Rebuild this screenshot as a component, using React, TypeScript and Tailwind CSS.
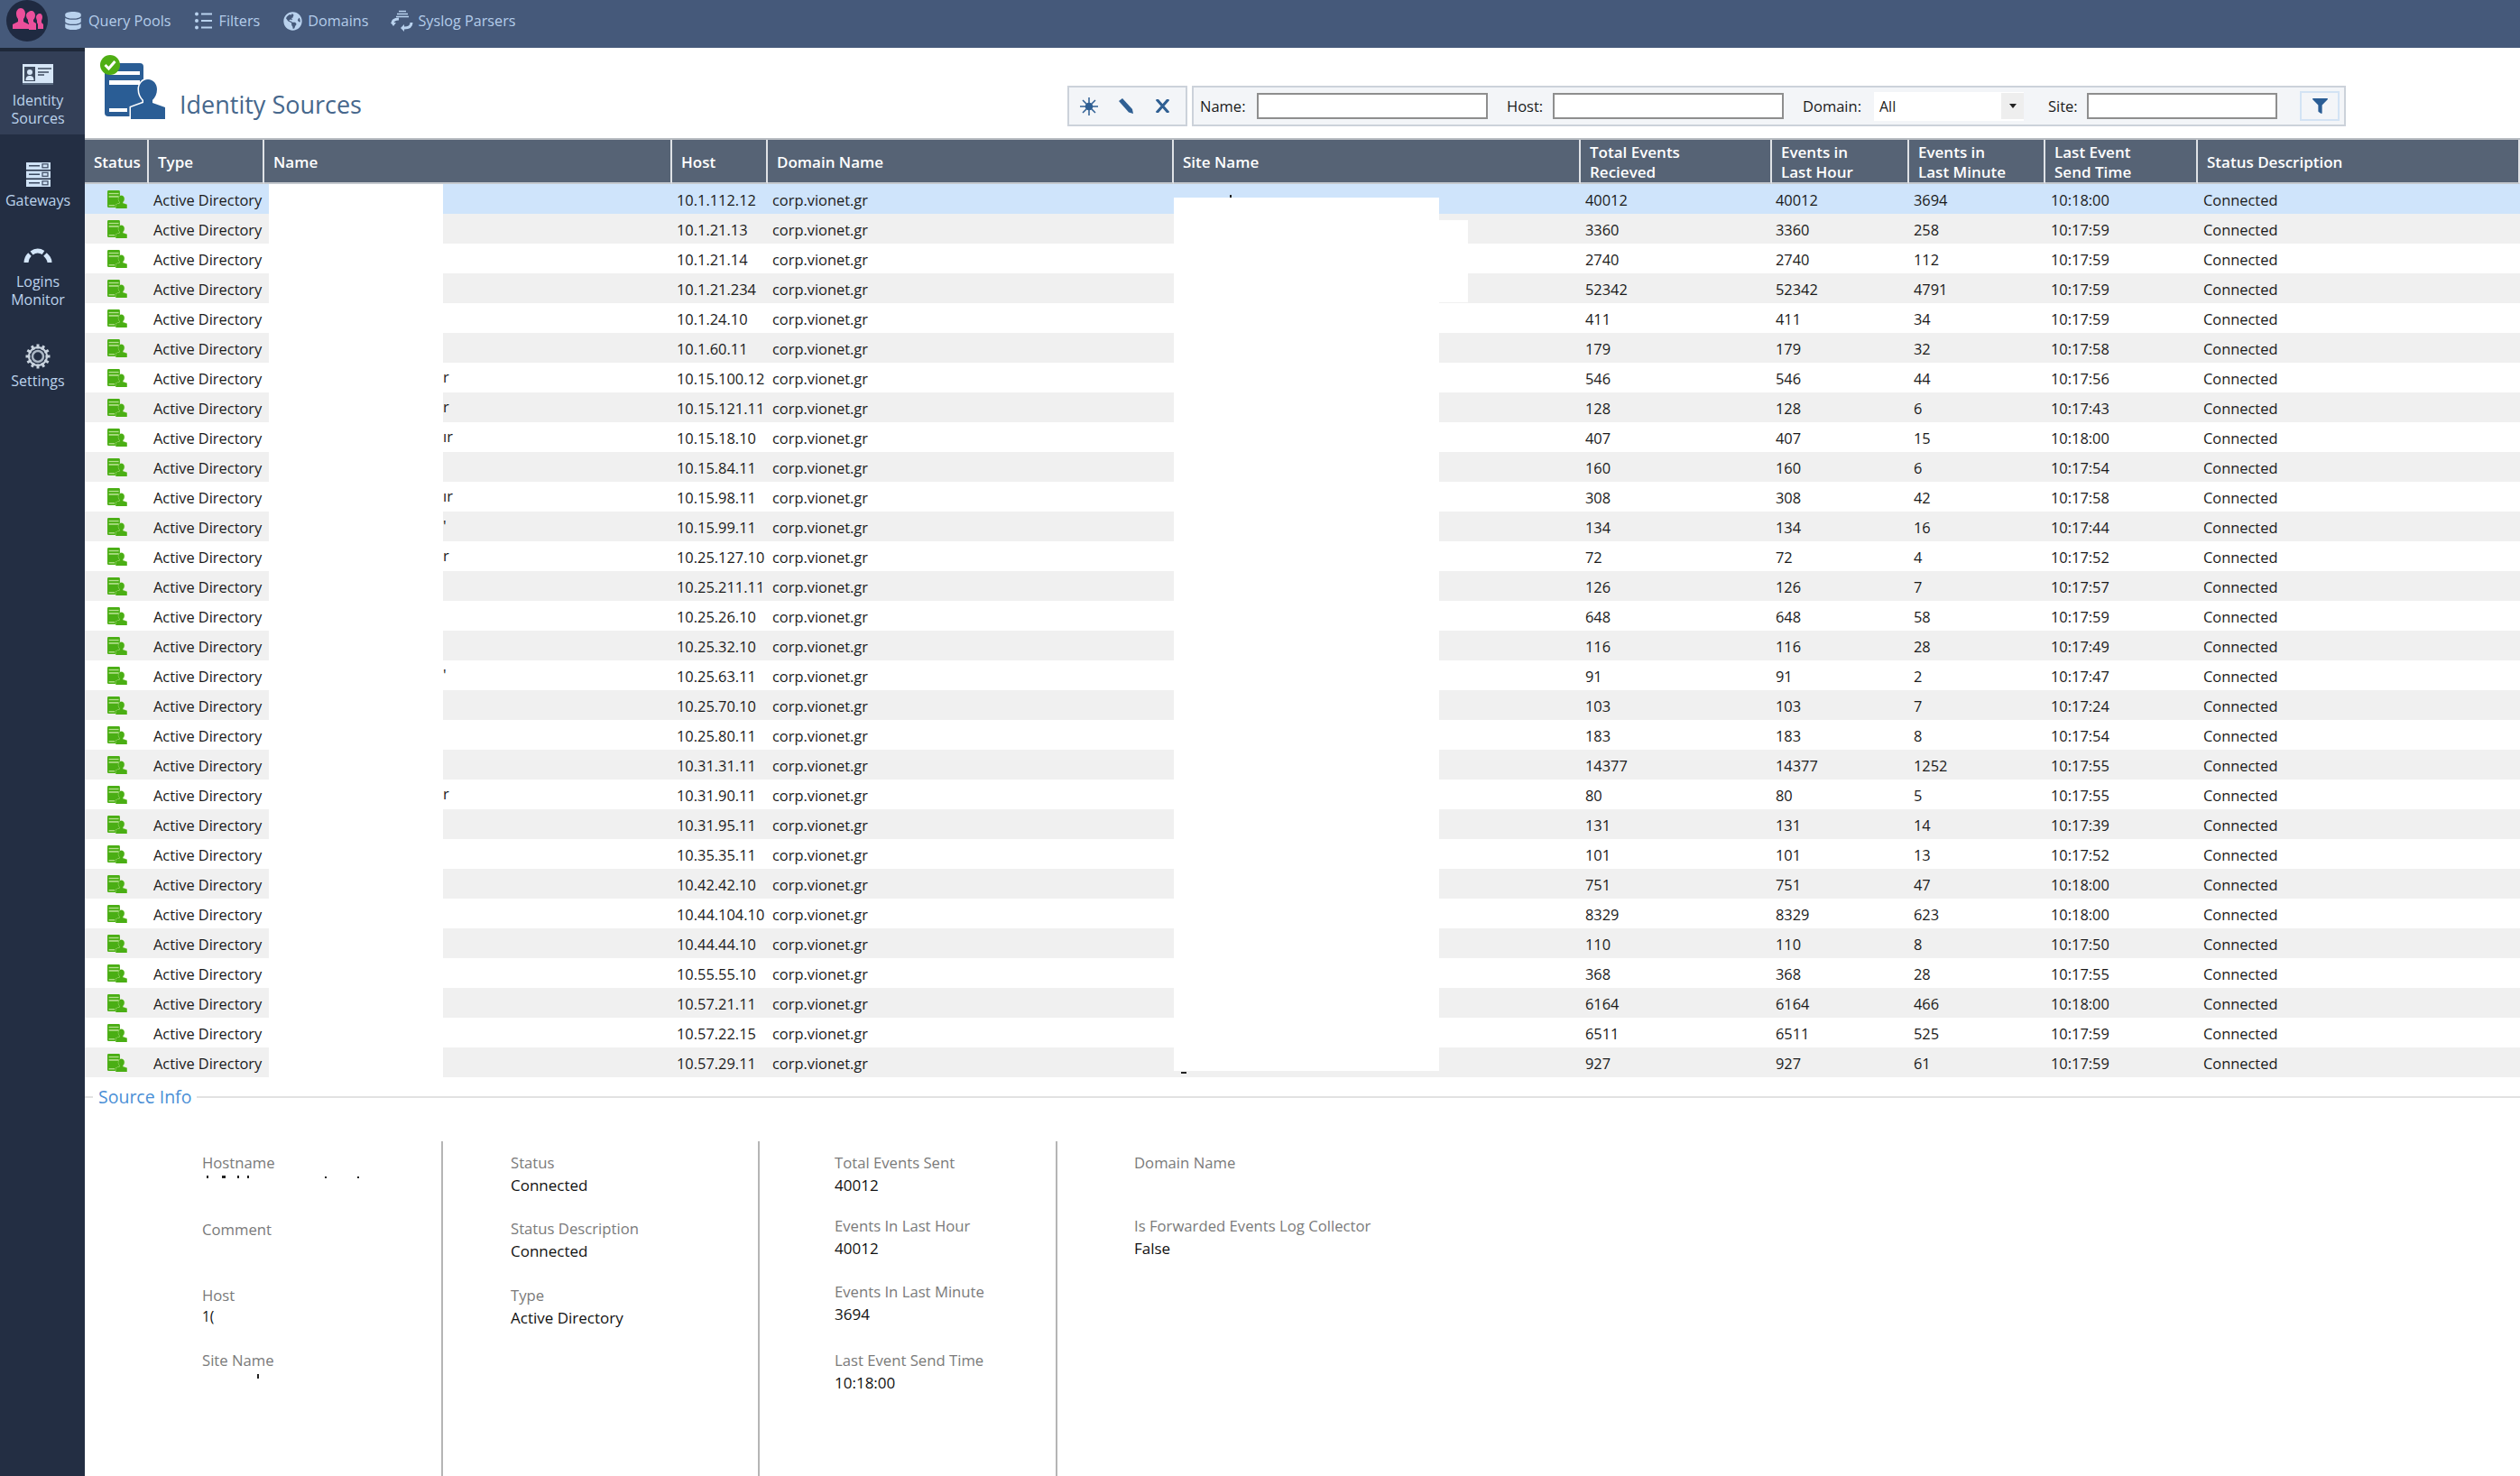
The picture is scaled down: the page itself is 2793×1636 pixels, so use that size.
import { FaDatabase, FaFilter, FaGlobeAmericas } from "react-icons/fa";

const font = "font-['Open_Sans','Liberation_Sans',sans-serif]";

const PERSON = "M48 18c6 0 10 5 10 11 0 5-2 9-5 12v3l14 5v13H29V49l14-5v-3c-3-3-5-7-5-12 0-6 4-11 10-11z";

function SourceIcon({ color, stripe, className }: { color: string; stripe: string; className: string }) {
  return (
    <svg viewBox="0 0 68 62" className={className}>
      <rect x="0" y="0" width="43" height="59" rx="4" fill={color} />
      <rect x="5" y="9" width="34" height="4" fill={stripe} />
      <rect x="5" y="19" width="34" height="5" fill={stripe} />
      <rect x="5" y="50" width="20" height="4" fill={stripe} />
      <path d={PERSON} fill={color} stroke={stripe} strokeWidth="3" paintOrder="stroke" />
    </svg>
  );
}

function PeopleLogo() {
  return (
    <svg viewBox="0 0 46 46" className="h-[46px] w-[46px]">
      <circle cx="23" cy="23" r="23" fill="#1f2a41" />
      <g fill="#ec4f9b">
        <path d="M37 15c2 0 3 2 3 4s-1 3-1 4v2l2 2v5h-6v-5l-1-2v-2c0-1-1-2-1-4s2-4 4-4z" />
        <path d="M28 12c2 0 4 2 4 5 0 2-1 4-2 5v2l3 2v7h-8v-7l-1-2v-2c-1-1-2-3-2-5 0-3 4-5 6-5z" />
        <path d="M16 9c3 0 5 3 5 6 0 3-1 5-2 6v3l6 3v5H7v-5l6-3v-3c-1-1-2-3-2-6 0-3 2-6 5-6z" />
      </g>
    </svg>
  );
}

function ListIcon() {
  return (
    <svg viewBox="0 0 19 20" className="h-[20px] w-[19px]" fill="#b9d2ee">
      <circle cx="2" cy="2.5" r="2" />
      <circle cx="2" cy="10" r="2" />
      <circle cx="2" cy="17.5" r="2" />
      <rect x="7" y="1.5" width="12" height="2" />
      <rect x="7" y="9" width="12" height="2" />
      <rect x="7" y="16.5" width="12" height="2" />
    </svg>
  );
}

function SyslogIcon() {
  return (
    <svg viewBox="0 0 25 24" className="h-[24px] w-[25px]" fill="none" stroke="#b9d2ee">
      <path d="M9 1.5h8M7 4.5h12M6 7.5h14" strokeWidth="1.6" />
      <path d="M2 15c0-4 3-5 7-5" strokeWidth="3" />
      <path d="M0 14l3 4 3-4z" fill="#b9d2ee" stroke="none" />
      <path d="M23 14c0 4-3 6-8 6" strokeWidth="3" />
      <path d="M15 16l-4 4 4 4z" fill="#b9d2ee" stroke="none" />
    </svg>
  );
}

function IdCardIcon() {
  return (
    <svg viewBox="0 0 34 23" className="h-[23px] w-[34px]">
      <rect x="0" y="0" width="34" height="21" fill="#d6e6f7" />
      <rect x="0" y="21" width="34" height="2" fill="#5a6a80" />
      <rect x="2" y="3" width="12" height="16" fill="#3f4c60" />
      <circle cx="8" cy="9" r="3" fill="#d6e6f7" />
      <path d="M3.5 18c0-4 2-5 4.500-5s4.500 1 4.500 5z" fill="#d6e6f7" />
      <path d="M17 5h15M17 9h12M17 12h7" stroke="#3f4c60" strokeWidth="1.500" />
    </svg>
  );
}

function GatewayIcon() {
  return (
    <svg viewBox="0 0 27 27" className="h-[27px] w-[27px]">
      {[0, 9.500, 19].map((y) => (
        <g key={y}>
          <rect x="0" y={y} width="27" height="8" fill="#cfe2f6" />
          <rect x="3" y={y + 3} width="12" height="1.500" fill="#3c4a60" />
          <rect x="18" y={y + 1.800} width="6" height="4" fill="none" stroke="#3c4a60" strokeWidth="1.200" />
        </g>
      ))}
    </svg>
  );
}

function GaugeIcon() {
  return (
    <svg viewBox="0 0 32 18" className="h-[18px] w-[32px]" fill="none" stroke="#d3e5f8" strokeWidth="5">
      <path d="M3 17c0-4 1-6 4-9" />
      <path d="M9 6.500c4-3 9-3 13-.5" />
      <path d="M24 8c3 3 5 5 5 9" />
    </svg>
  );
}

function GearIcon() {
  const teeth = [0, 30, 60, 90, 120, 150, 180, 210, 240, 270, 300, 330];
  return (
    <svg viewBox="0 0 28 28" className="h-[28px] w-[28px]" fill="none">
      {teeth.map((a) => (
        <rect key={a} x="12.500" y="0.500" width="3" height="5" fill="#c9d3de" transform={`rotate(${a} 14 14)`} />
      ))}
      <circle cx="14" cy="14" r="10" stroke="#c9d3de" strokeWidth="2" />
      <circle cx="14" cy="14" r="6" stroke="#aab6c4" strokeWidth="2.500" />
    </svg>
  );
}

function Spark() {
  return (
    <svg viewBox="0 0 20 20" className="h-[20px] w-[20px] shrink-0" stroke="#2f5f93" strokeWidth="1.500">
      <path d="M10 0v20M0 10h20M3 3l14 14M17 3L3 17" />
      <circle cx="10" cy="10" r="3.500" fill="#2f5f93" />
    </svg>
  );
}

function Pencil() {
  return (
    <svg viewBox="0 0 18 17" className="ml-[22px] h-[17px] w-[18px] shrink-0" fill="#2f5f93">
      <path d="M1 3l4-3 11 12 1 5-5-1.500z" />
    </svg>
  );
}

function Cross() {
  return (
    <svg viewBox="0 0 15 15" className="ml-[24px] h-[15px] w-[15px] shrink-0" fill="none" stroke="#2f5f93" strokeWidth="3">
      <path d="M1 0l13 15M14 0L1 15" />
    </svg>
  );
}

const rows = [
  ["10.1.112.12", "40012", "40012", "3694", "10:18:00"],
  ["10.1.21.13", "3360", "3360", "258", "10:17:59"],
  ["10.1.21.14", "2740", "2740", "112", "10:17:59"],
  ["10.1.21.234", "52342", "52342", "4791", "10:17:59"],
  ["10.1.24.10", "411", "411", "34", "10:17:59"],
  ["10.1.60.11", "179", "179", "32", "10:17:58"],
  ["10.15.100.12", "546", "546", "44", "10:17:56"],
  ["10.15.121.11", "128", "128", "6", "10:17:43"],
  ["10.15.18.10", "407", "407", "15", "10:18:00"],
  ["10.15.84.11", "160", "160", "6", "10:17:54"],
  ["10.15.98.11", "308", "308", "42", "10:17:58"],
  ["10.15.99.11", "134", "134", "16", "10:17:44"],
  ["10.25.127.10", "72", "72", "4", "10:17:52"],
  ["10.25.211.11", "126", "126", "7", "10:17:57"],
  ["10.25.26.10", "648", "648", "58", "10:17:59"],
  ["10.25.32.10", "116", "116", "28", "10:17:49"],
  ["10.25.63.11", "91", "91", "2", "10:17:47"],
  ["10.25.70.10", "103", "103", "7", "10:17:24"],
  ["10.25.80.11", "183", "183", "8", "10:17:54"],
  ["10.31.31.11", "14377", "14377", "1252", "10:17:55"],
  ["10.31.90.11", "80", "80", "5", "10:17:55"],
  ["10.31.95.11", "131", "131", "14", "10:17:39"],
  ["10.35.35.11", "101", "101", "13", "10:17:52"],
  ["10.42.42.10", "751", "751", "47", "10:18:00"],
  ["10.44.104.10", "8329", "8329", "623", "10:18:00"],
  ["10.44.44.10", "110", "110", "8", "10:17:50"],
  ["10.55.55.10", "368", "368", "28", "10:17:55"],
  ["10.57.21.11", "6164", "6164", "466", "10:18:00"],
  ["10.57.22.15", "6511", "6511", "525", "10:17:59"],
  ["10.57.29.11", "927", "927", "61", "10:17:59"],
];

// what sticks out to the right of the masked names
const nameTail: Record<number, string> = { 6: "r", 7: "r", 8: "ır", 10: "ır", 11: "'", 12: "r", 16: "'", 20: "r" };

const gridCols = "grid grid-cols-[71px_128px_452px_106px_450px_451px_212px_152px_151px_169px_1fr]";

const headers = [
  ["Status"],
  ["Type"],
  ["Name"],
  ["Host"],
  ["Domain Name"],
  ["Site Name"],
  ["Total Events", "Recieved"],
  ["Events in", "Last Hour"],
  ["Events in", "Last Minute"],
  ["Last Event", "Send Time"],
  ["Status Description"],
];

function Field({ label, value, className }: { label: string; value?: string; className: string }) {
  return (
    <div className={className}>
      <div className="text-[16.700px] leading-[27px] text-[#7a7a7a]">{label}</div>
      {value && <div className="text-[17px] leading-[24px] text-[#111]">{value}</div>}
    </div>
  );
}

export default function App() {
  return (
    <div className={`flex h-[1636px] w-[2793px] flex-col overflow-hidden bg-white ${font}`}>
      <div className="relative flex h-[53px] items-center bg-[#45597a] pb-[7px] pl-[72px] text-[16.200px] text-[#b4cdea]">
        <div className="absolute left-[7px] top-0">
          <PeopleLogo />
        </div>
        <FaDatabase className="h-[20px] w-[18px] text-[#b9d2ee]" />
        <span className="ml-[8px]">Query Pools</span>
        <div className="ml-[26px]">
          <ListIcon />
        </div>
        <span className="ml-[8px]">Filters</span>
        <FaGlobeAmericas className="ml-[26px] h-[21px] w-[21px] text-[#b9d2ee]" />
        <span className="ml-[6px]">Domains</span>
        <div className="ml-[25px]">
          <SyslogIcon />
        </div>
        <span className="ml-[5px]">Syslog Parsers</span>
      </div>

      <div className="flex min-h-0 flex-1">
        <div className="flex w-[94px] shrink-0 flex-col bg-[#232e43] pr-[10px] text-[16px] leading-[20px] text-[#bcd3ec]">
          <div className="-mr-[10px] h-[4px] bg-[#1e2839]" />
          <div className="-mr-[10px] flex h-[92px] flex-col items-center bg-[#333f57] pr-[10px] pt-[14px]">
            <IdCardIcon />
            <div className="mt-[7px] text-center">Identity<br />Sources</div>
          </div>
          <div className="mt-[31px] flex flex-col items-center">
            <GatewayIcon />
            <div className="mt-[5px]">Gateways</div>
          </div>
          <div className="mt-[42px] flex flex-col items-center">
            <GaugeIcon />
            <div className="mt-[10px] text-center">Logins<br />Monitor</div>
          </div>
          <div className="mt-[39px] flex flex-col items-center">
            <GearIcon />
            <div className="mt-[3px]">Settings</div>
          </div>
        </div>

        <div className="flex min-w-0 flex-1 flex-col">
          <div className="flex h-[100px] items-start justify-between pr-[193px]">
            <div className="flex items-end pl-[22px] pt-[17px]">
              <div className="relative">
                <SourceIcon color="#2a5d95" stripe="#fff" className="h-[62px] w-[68px]" />
                <svg viewBox="0 0 22 22" className="absolute -left-[5px] -top-[9px] h-[22px] w-[22px]">
                  <circle cx="11" cy="11" r="11" fill="#4fae14" />
                  <path d="M5.500 11l4 4 7-8" fill="none" stroke="#fff" strokeWidth="3" />
                </svg>
              </div>
              <div className="relative top-[2px] ml-[15px] text-[27px] leading-[36px] text-[#46678c]">Identity Sources</div>
            </div>
            <div className="mt-[42px] flex h-[45px] pt-0 text-[16.500px] text-[#1a1a1a]">
              <div className="flex w-[133px] items-center border-2 border-[#ccd2da] bg-[#f3f5f8] pl-[12px]">
                <Spark />
                <Pencil />
                <Cross />
              </div>
              <div className="ml-[5px] flex w-[1279px] items-center border-2 border-[#ccd2da] bg-[#f3f5f8] pl-[7px]">
                <span className="w-[63px] pt-[1px]">Name:</span>
                <input className="h-[29px] w-[256px] border-2 border-[#8e8e8e] bg-white" />
                <span className="ml-[21px] w-[51px] pt-[1px]">Host:</span>
                <input className="h-[29px] w-[256px] border-2 border-[#8e8e8e] bg-white" />
                <span className="ml-[21px] w-[79px] pt-[1px]">Domain:</span>
                <div className="flex h-[32px] w-[166px] items-center bg-white pl-[6px] text-[16px]">
                  <span className="flex-1 pt-[1px]">All</span>
                  <div className="flex h-[29px] w-[25px] items-center justify-center bg-[#eeeeee]">
                    <div className="h-0 w-0 border-x-[4px] border-t-[5px] border-x-transparent border-t-[#222]" />
                  </div>
                </div>
                <span className="ml-[27px] w-[43px] pt-[1px]">Site:</span>
                <input className="h-[29px] w-[211px] border-2 border-[#8e8e8e] bg-white" />
                <div className="ml-[25px] flex h-[33px] w-[44px] items-center justify-center border-2 border-[#d3e3f4] bg-[#f3f5f8]">
                  <FaFilter className="h-[17px] w-[17px] text-[#2a5d95]" />
                </div>
              </div>
            </div>
          </div>

          <div className={`${gridCols} h-[51px] border-t-2 border-[#b9bdc2] bg-[#566375] text-[17px] font-semibold leading-[22px] text-white`}>
            {headers.map((h, i) => (
              <div key={i} className="flex flex-col justify-center border-r-2 border-b-2 border-r-[#dfe2e6] border-b-[#c4c8ce] pl-[10px] pt-[2px]">
                {h.map((line) => (
                  <div key={line}>{line}</div>
                ))}
              </div>
            ))}
          </div>

          <div className="relative text-[16.400px] text-[#1a1a1a]">
            {rows.map((r, i) => (
              <div
                key={r[0]}
                className={`${gridCols} h-[33px] items-center ${i === 0 ? "bg-[#cfe4fb]" : i % 2 === 1 ? "bg-[#f0f0f0]" : "bg-white"}`}
              >
                <div className="flex justify-center pl-[1px]">
                  <SourceIcon color="#4aae14" stripe="#b5e08f" className="h-[20px] w-[22px]" />
                </div>
                <div className="pl-[5px] pt-[3px]">Active Directory</div>
                <div className="flex h-[33px] items-center">
                  <div className="ml-[5px] h-[33px] w-[193px] bg-white" />
                  <span>{nameTail[i]}</span>
                </div>
                <div className="pl-[5px] pt-[3px]">{r[0]}</div>
                <div className="pl-[5px] pt-[3px]">corp.vionet.gr</div>
                <div />
                <div className="pl-[5px] pt-[3px]">{r[1]}</div>
                <div className="pl-[4px] pt-[3px]">{r[2]}</div>
                <div className="pl-[5px] pt-[3px]">{r[3]}</div>
                <div className="pl-[6px] pt-[3px]">{r[4]}</div>
                <div className="pl-[6px] pt-[3px]">Connected</div>
              </div>
            ))}
            {/* masked site names */}
            <div className="absolute left-[1207px] top-[15px] h-[25px] w-[294px] bg-white" />
            <div className="absolute left-[1207px] top-[40px] h-[91px] w-[326px] bg-white" />
            <div className="absolute left-[1207px] top-[131px] h-[852px] w-[294px] bg-white" />
            <div className="absolute left-[1269px] top-[12px] h-[3px] w-[2px] bg-[#222]" />
            <div className="absolute left-[1215px] top-[984px] h-[2px] w-[6px] bg-[#222]" />
          </div>

          <div className="flex h-[42px] items-center pt-[2px]">
            <div className="h-[2px] w-[9px] bg-[#e2e2e2]" />
            <span className="ml-[6px] text-[19.500px] text-[#4a8fd6]">Source Info</span>
            <div className="ml-[6px] h-[2px] flex-1 bg-[#e2e2e2]" />
          </div>

          <div className="mt-[29px] grid min-h-0 flex-1 grid-cols-[397px_351px_330px_1fr]">
            <div className="border-r-2 border-[#b5b5b5] pl-[130px] pt-[10px]">
              <div className="relative h-[74px]">
                <div className="text-[16.700px] leading-[27px] text-[#7a7a7a]">Hostname</div>
                {/* tops of the masked host name */}
                <svg viewBox="0 0 175 4" className="mt-[1px] h-[4px] w-[175px]">
                  <path d="M5 0h2v3H5zM22 0h4v3h-4zM39 0h2v3h-2zM50 0h2v3h-2zM136 1h2v2h-2zM172 1h2v2h-2z" fill="#222" />
                </svg>
              </div>
              <Field className="h-[73px]" label="Comment" />
              <div className="h-[72px]">
                <div className="text-[16.700px] leading-[27px] text-[#7a7a7a]">Host</div>
                <div className="text-[15.500px] leading-[20px] text-[#111]">1(</div>
              </div>
              <div>
                <div className="text-[16.700px] leading-[27px] text-[#7a7a7a]">Site Name</div>
                <div className="ml-[61px] mt-[2px] h-[5px] w-[2px] bg-[#222]" />
              </div>
            </div>
            <div className="border-r-2 border-[#b5b5b5] pl-[75px] pt-[10px]">
              <Field className="h-[73px]" label="Status" value="Connected" />
              <Field className="h-[74px]" label="Status Description" value="Connected" />
              <Field className="" label="Type" value="Active Directory" />
            </div>
            <div className="border-r-2 border-[#b5b5b5] pl-[83px] pt-[10px]">
              <Field className="h-[70px]" label="Total Events Sent" value="40012" />
              <Field className="h-[73px]" label="Events In Last Hour" value="40012" />
              <Field className="h-[76px]" label="Events In Last Minute" value="3694" />
              <Field className="" label="Last Event Send Time" value="10:18:00" />
            </div>
            <div className="pl-[85px] pt-[10px]">
              <Field className="h-[70px]" label="Domain Name" />
              <Field className="" label="Is Forwarded Events Log Collector" value="False" />
            </div>
          </div>
        </div>
      </div>
    </div>
  );
}
